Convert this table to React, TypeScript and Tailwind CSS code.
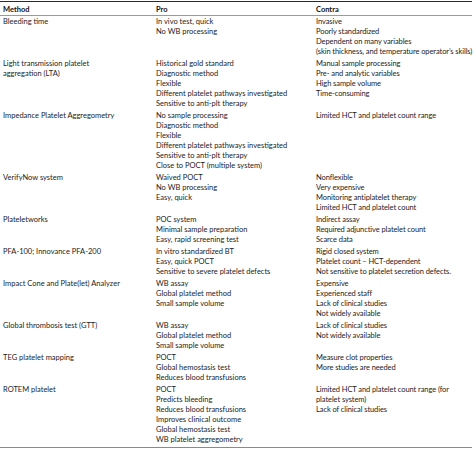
import React from "react";

type Row = { m: string[]; p: string[]; c: string[] };

const rows: Row[] = [
  {
    m: ["Bleeding time"],
    p: ["In vivo test, quick", "No WB processing"],
    c: [
      "Invasive",
      "Poorly standardized",
      "Dependent on many variables",
      "(skin thickness, and temperature operator\u2019s skills)",
    ],
  },
  {
    m: ["Light transmission platelet", "aggregation (LTA)"],
    p: [
      "Historical gold standard",
      "Diagnostic method",
      "Flexible",
      "Different platelet pathways investigated",
      "Sensitive to anti-plt therapy",
    ],
    c: [
      "Manual sample processing",
      "Pre- and analytic variables",
      "High sample volume",
      "Time-consuming",
    ],
  },
  {
    m: ["Impedance Platelet Aggregometry"],
    p: [
      "No sample processing",
      "Diagnostic method",
      "Flexible",
      "Different platelet pathways investigated",
      "Sensitive to anti-plt therapy",
      "Close to POCT (multiple system)",
    ],
    c: ["Limited HCT and platelet count range"],
  },
  {
    m: ["VerifyNow system"],
    p: ["Waived POCT", "No WB processing", "Easy, quick"],
    c: [
      "Nonflexible",
      "Very expensive",
      "Monitoring antiplatelet therapy",
      "Limited HCT and platelet count",
    ],
  },
  {
    m: ["Plateletworks"],
    p: ["POC system", "Minimal sample preparation", "Easy, rapid screening test"],
    c: ["Indirect assay", "Required adjunctive platelet count", "Scarce data"],
  },
  {
    m: ["PFA-100; Innovance PFA-200"],
    p: [
      "In vitro standardized BT",
      "Easy, quick POCT",
      "Sensitive to severe platelet defects",
    ],
    c: [
      "Rigid closed system",
      "Platelet count \u2013 HCT-dependent",
      "Not sensitive to platelet secretion defects.",
    ],
  },
  {
    m: ["Impact Cone and Plate(let) Analyzer"],
    p: ["WB assay", "Global platelet method", "Small sample volume"],
    c: [
      "Expensive",
      "Experienced staff",
      "Lack of clinical studies",
      "Not widely available",
    ],
  },
  {
    m: ["Global thrombosis test (GTT)"],
    p: ["WB assay", "Global platelet method", "Small sample volume"],
    c: ["Lack of clinical studies", "Not widely available"],
  },
  {
    m: ["TEG platelet mapping"],
    p: ["POCT", "Global hemostasis test", "Reduces blood transfusions"],
    c: ["Measure clot properties", "More studies are needed"],
  },
  {
    m: ["ROTEM platelet"],
    p: [
      "POCT",
      "Predicts bleeding",
      "Reduces blood transfusions",
      "Improves clinical outcome",
      "Global hemostasis test",
      "WB platelet aggregometry",
    ],
    c: [
      "Limited HCT and platelet count range (for",
      "platelet system)",
      "Lack of clinical studies",
    ],
  },
];

function Cell({ lines, tight }: { lines: string[]; tight?: boolean }) {
  return (
    <div className={tight ? "flex flex-col tracking-[-0.08px]" : "flex flex-col"}>
      {lines.map((l, i) => (
        <div key={i} className="whitespace-nowrap">
          {l}
        </div>
      ))}
    </div>
  );
}

export default function App() {
  return (
    <div
      className="w-[474px] h-[454px] bg-white text-[#1c1c1c] text-[7.5px] leading-[10px]"
      style={{ fontFamily: "Lato, 'Open Sans', sans-serif" }}
    >
      <div className="mt-[1px] mr-[2px] border-t-[1.5px] border-[#2a2a2a]" />
      <div className="grid grid-cols-[153px_160px_1fr] pt-[2.5px] pb-[0.5px] pl-[3px] font-bold text-[#111]">
        <div>Method</div>
        <div>Pro</div>
        <div>Contra</div>
      </div>
      <div className="mr-[2px] border-t border-[#9a9a9a]" />
      {rows.map((r, i) => (
        <div
          key={i}
          className="grid grid-cols-[153px_160px_1fr] py-[1px] pl-[3px]"
        >
          <Cell lines={r.m} />
          <Cell lines={r.p} />
          <Cell lines={r.c} tight />
        </div>
      ))}
      <div className="mt-[1px] mr-[2px] border-t border-[#8a8a8a]" />
    </div>
  );
}
